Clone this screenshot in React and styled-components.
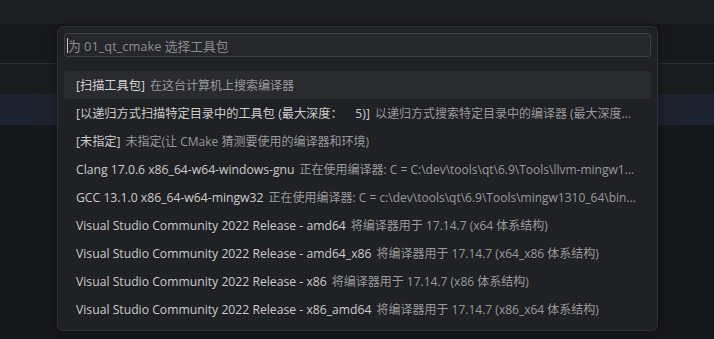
import React from 'react';
import styled, { createGlobalStyle } from 'styled-components';

/* STYLES */

const GlobalStyle = createGlobalStyle`
  html, body {
    margin: 0;
    padding: 0;
    background: #16171a;
  }
  body {
    font-family: "Open Sans", "Noto Sans CJK SC", sans-serif;
  }
`;

const Page = styled.div`
  position: relative;
  width: 714px;
  height: 339px;
  overflow: hidden;
  background: #16171a;
`;

// Editor chrome behind the palette
const TitleBar = styled.div`
  height: 24px;
  background: #1e1f22;
`;

const TabStrip = styled.div`
  height: 39px;
  background: #17181a;
  border-bottom: 1px solid #2b2c30;
`;

const Breadcrumbs = styled.div`
  height: 30px;
  background: #1a1b1e;
`;

const SelectedLine = styled.div`
  height: 31px;
  background: linear-gradient(90deg, #1d2330 0%, #1f2126 30%, #1f2126 70%, #1d2330 100%);
`;

// Quick pick overlay
const Palette = styled.div`
  position: absolute;
  top: 26px;
  left: 57px;
  width: 601px;
  box-sizing: border-box;
  padding: 6px 6px 7px;
  background: #202124;
  border: 1px solid #2f3034;
  border-radius: 6px;
  box-shadow: 0 0 8px rgba(0, 0, 0, 0.35);
`;

const InputBox = styled.div`
  height: 24px;
  box-sizing: border-box;
  display: flex;
  align-items: center;
  padding: 0 2px;
  background: #26272a;
  border: 1px solid #3e3f43;
  border-radius: 3px;
  font-size: 12.8px;
  color: #8b8c8f;
`;

const Caret = styled.span`
  width: 1px;
  height: 15px;
  background: #c8c8c8;
`;

const List = styled.div`
  margin-top: 14px;
  display: flex;
  flex-direction: column;
`;

const Row = styled.div`
  height: 28px;
  display: flex;
  align-items: center;
  padding: 0 12px;
  border-radius: 3px;
  background: ${props => (props.active ? '#2a2b2e' : 'transparent')};
  font-size: 12.2px;
  white-space: nowrap;
  overflow: hidden;
`;

const Label = styled.span`
  color: ${props => (props.active ? '#d4d4d4' : '#cccccc')};
  flex: none;
`;

const Description = styled.span`
  color: #9a9a9c;
  font-size: 12px;
  margin-left: 5px;
  overflow: hidden;
  text-overflow: ellipsis;
  min-width: 0;
`;

/* Kit entries:
*   label - kit name
*   description - detail shown in grey
* */
const kits = [
    { label: '[扫描工具包]', description: '在这台计算机上搜索编译器' },
    { label: '[以递归方式扫描特定目录中的工具包 (最大深度：\u00a0\u00a0\u00a0\u00a05)]', description: '以递归方式搜索特定目录中的编译器 (最大深度： 5)' },
    { label: '[未指定]', description: '未指定(让 CMake 猜测要使用的编译器和环境)' },
    { label: 'Clang 17.0.6 x86_64-w64-windows-gnu', description: '正在使用编译器: C = C:\\dev\\tools\\qt\\6.9\\Tools\\llvm-mingw1706_64\\bin\\clang.exe' },
    { label: 'GCC 13.1.0 x86_64-w64-mingw32', description: '正在使用编译器: C = c:\\dev\\tools\\qt\\6.9\\Tools\\mingw1310_64\\bin\\gcc.exe' },
    { label: 'Visual Studio Community 2022 Release - amd64', description: '将编译器用于 17.14.7 (x64 体系结构)' },
    { label: 'Visual Studio Community 2022 Release - amd64_x86', description: '将编译器用于 17.14.7 (x64_x86 体系结构)' },
    { label: 'Visual Studio Community 2022 Release - x86', description: '将编译器用于 17.14.7 (x86 体系结构)' },
    { label: 'Visual Studio Community 2022 Release - x86_amd64', description: '将编译器用于 17.14.7 (x86_x64 体系结构)' },
];

function App() {
    return (
        <Page>
            <GlobalStyle/>
            <TitleBar/>
            <TabStrip/>
            <Breadcrumbs/>
            <SelectedLine/>
            <Palette>
                <InputBox>
                    <Caret/>
                    <span>为 01_qt_cmake 选择工具包</span>
                </InputBox>
                <List>
                    {kits.map((kit, i) => (
                        <Row key={kit.label} active={i === 0}>
                            <Label active={i === 0}>{kit.label}</Label>
                            <Description>{kit.description}</Description>
                        </Row>
                    ))}
                </List>
            </Palette>
        </Page>
    );
}

export default App;
